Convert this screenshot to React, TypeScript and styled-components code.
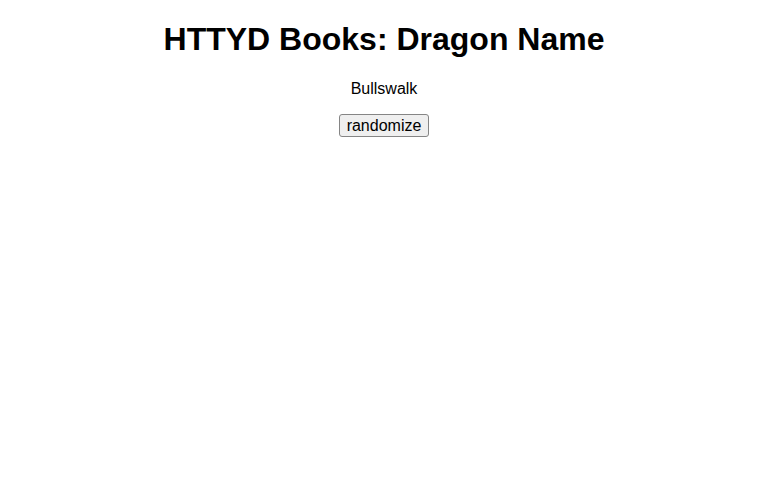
import React, {useState} from 'react';
import styled, {createGlobalStyle} from 'styled-components';

const GlobalStyle = createGlobalStyle`
  body {
    margin: 0 8px;
    font-family: "Liberation Sans", Arial, sans-serif;
    color: #000;
    background: #fff;
  }
`;

const Page = styled.div`
  text-align: center;
`;

const Title = styled.h1`
  font-size: 32px;
  font-weight: bold;
  margin: 21.44px 0;
`;

const Name = styled.p`
  font-size: 16px;
  margin: 16px 0;
`;

const RandomButton = styled.button`
  font-family: "Liberation Sans", Arial, sans-serif;
  font-size: 16px;
  color: #000;
  background: #efefef;
  border: 1px solid #858585;
  border-radius: 3px;
  padding: 2px 7px 1px;
  cursor: pointer;
`;

const prefixes = ['Bull', 'Fire', 'Storm', 'Night', 'Sea', 'Sky', 'Grim', 'Thunder'];
const suffixes = ['swalk', 'fang', 'drum', 'claw', 'wing', 'horn', 'tooth', 'scale'];

const pick = (list: string[]) => list[Math.floor(Math.random() * list.length)];

const App = () => {
  const [name, setName] = useState('Bullswalk');

  return (
    <Page>
      <GlobalStyle />
      <Title>HTTYD Books: Dragon Name</Title>
      <Name>{name}</Name>
      <RandomButton onClick={() => setName(pick(prefixes) + pick(suffixes))}>
        randomize
      </RandomButton>
    </Page>
  );
};

export default App;
